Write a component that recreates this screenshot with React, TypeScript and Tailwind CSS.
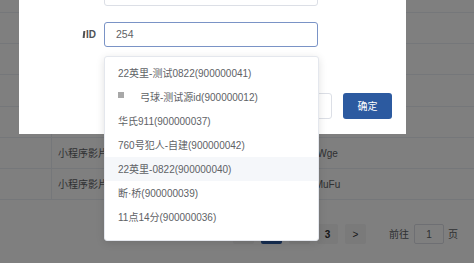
import React from 'react';

const options = [
  '22英里-测试0822(900000041)',
  '弓球-测试源id(900000012)',
  '华氏911(900000037)',
  '760号犯人-自建(900000042)',
  '22英里-0822(900000040)',
  '断·桥(900000039)',
  '11点14分(900000036)',
];

const rows = [
  { h: 'h-[31px]', name: '', owner: '' },
  { h: 'h-[31px]', name: '', owner: '' },
  { h: 'h-[32px]', name: '', owner: '' },
  { h: 'h-[31px]', name: '', owner: '' },
  { h: 'h-[31px]', name: '小程序影片测试', owner: 'Wge' },
  { h: 'h-[32px] border-b', name: '小程序影片测试', owner: 'MuFu' },
];

export default function App() {
  return (
    <div
      className="relative w-[474px] h-[263px] overflow-hidden bg-white text-[10px] text-[#606266]"
      style={{ fontFamily: '"Liberation Sans", "Noto Sans CJK SC", sans-serif' }}
    >
      {/* Table behind the modal */}
      <div className="pt-[12px]">
        {rows.map((r, i) => (
          <div key={i} className={`flex border-t border-[#ebeef5] ${r.h}`}>
            <div className="w-[52px] border-r border-[#ebeef5]" />
            <div className="w-[238px] pl-[6px] flex items-center whitespace-nowrap overflow-hidden">{r.name}</div>
            <div className="w-[75px] flex items-center justify-center">{r.owner}</div>
            <div className="flex-1" />
          </div>
        ))}
      </div>

      {/* Pagination */}
      <div className="mt-[24px] flex items-center justify-end pr-[16px] h-[20px]">
        <div className="flex gap-[7px]">
          <div className="w-[21px] h-[20px] rounded-[2px] bg-[#f4f4f5] flex items-center justify-center">&lt;</div>
          <div className="w-[21px] h-[20px] rounded-[2px] bg-[#2c5aa0] text-white flex items-center justify-center">1</div>
          <div className="w-[21px] h-[20px] rounded-[2px] bg-[#f4f4f5] flex items-center justify-center text-[#303133] font-bold">2</div>
          <div className="w-[21px] h-[20px] rounded-[2px] bg-[#f4f4f5] flex items-center justify-center text-[#303133] font-bold">3</div>
          <div className="w-[21px] h-[20px] rounded-[2px] bg-[#f4f4f5] flex items-center justify-center text-[#303133]">&gt;</div>
        </div>
        <span className="ml-[23px]">前往</span>
        <div className="ml-[5px] w-[30px] h-[20px] rounded-[2px] border border-[#dcdfe6] flex items-center justify-center">1</div>
        <span className="ml-[4px]">页</span>
      </div>

      {/* Modal backdrop */}
      <div className="absolute inset-0 bg-black/50" />

      {/* Dialog */}
      <div className="absolute left-[19px] top-0 w-[387px] h-[134px] bg-white flex flex-col">
        <div className="flex items-center mt-[-19px]">
          <div className="w-[77px]" />
          <div className="ml-[8px] w-[214px] h-[25px] rounded-[3px] border border-[#dcdfe6]" />
        </div>
        <div className="flex items-center mt-[16px]">
          <div className="w-[77px] flex justify-end items-center font-bold text-[#505256]">
            <span className="w-[2px] h-[7px] bg-[#505256] mr-[1px] -skew-x-6" />
            <span>ID</span>
          </div>
          <div className="ml-[8px] w-[214px] h-[25px] rounded-[3px] border border-[#7a93c6] flex items-center pl-[11px] text-[10.5px] text-[#606266]">
            254
          </div>
        </div>
        <div className="mt-[46px] flex justify-end gap-[11px] pr-[14px]">
          <div className="w-[49px] h-[26px] rounded-[3px] border border-[#dcdfe6] bg-white flex items-center justify-center">取消</div>
          <div className="w-[49px] h-[26px] rounded-[3px] bg-[#2c5aa0] text-white flex items-center justify-center">确定</div>
        </div>
      </div>

      {/* Select dropdown */}
      <div className="absolute left-[104px] top-[56px] w-[215px] h-[185px] bg-white rounded-[3px] border border-[#e4e7ed] shadow-[0_2px_8px_rgba(0,0,0,0.12)] pt-[4px]">
        {options.map((o, i) => (
          <div
            key={o}
            className={`h-[24px] flex items-center pl-[13px] whitespace-nowrap ${i === 4 ? 'bg-[#f5f7fa]' : ''}`}
          >
            {i === 1 ? (
              <>
                <span className="w-[6px] h-[6px] bg-[#a8a8a8] mb-[5px]" />
                <span className="ml-[16px]">{o}</span>
              </>
            ) : (
              o
            )}
          </div>
        ))}
      </div>
    </div>
  );
}
